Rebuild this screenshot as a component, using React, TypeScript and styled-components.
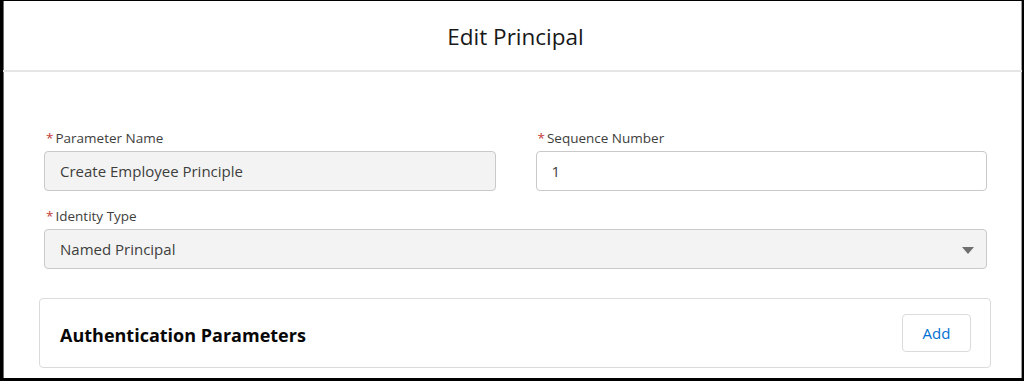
import React from 'react'
import styled, { createGlobalStyle } from 'styled-components'

const GlobalStyle = createGlobalStyle`
    html, body {
        margin: 0;
        padding: 0;
        background: #ffffff;
    }
    * {
        box-sizing: border-box;
    }
`

const Frame = styled.div`
    width: 1024px;
    height: 381px;
    background: #ffffff;
    border-style: solid;
    border-color: #000000;
    border-width: 1px 2px 3px 3px;
    box-shadow: inset 1px 0 0 #6b6b6b, inset -1px 0 0 #9a9a9a;
    font-family: 'Open Sans', 'Noto Sans', sans-serif;
    overflow: hidden;
`

const Header = styled.header`
    height: 71px;
    display: flex;
    align-items: center;
    justify-content: center;
    border-bottom: 2px solid #e5e5e5;
    padding-left: 6px;
    padding-top: 2px;
`

const Title = styled.h2`
    margin: 0;
    font-size: 22.5px;
    font-weight: 400;
    color: #181818;
`

const Body = styled.div`
    padding: 56px 31px 0 36px;
`

const Fields = styled.div`
    padding: 0 4px 0 5px;
    display: flex;
    flex-direction: column;
    gap: 15px;
`

const Row = styled.div<{ $cols: number }>`
    display: grid;
    grid-template-columns: repeat(${(p) => p.$cols}, 1fr);
    column-gap: 40px;
`

const Field = styled.div`
    display: flex;
    flex-direction: column;
    gap: 3px;
`

const Label = styled.label`
    font-size: 13.5px;
    line-height: 20px;
    color: #3e3e3c;
    padding-left: 2px;
`

const Required = styled.abbr`
    color: #c23934;
    text-decoration: none;
    margin-right: 2px;
`

const Input = styled.div<{ $disabled?: boolean }>`
    height: 40px;
    border: 1px solid #c9c9c9;
    border-radius: 4px;
    background: ${(p) => (p.$disabled ? '#f3f3f3' : '#ffffff')};
    display: flex;
    align-items: center;
    justify-content: space-between;
    padding: 0 12px 0 15px;
    font-size: 15px;
    color: #3e3e3c;
`

const Caret = styled.span`
    width: 0;
    height: 0;
    border-left: 6px solid transparent;
    border-right: 6px solid transparent;
    border-top: 7px solid #6f6f6f;
    margin-top: 2px;
`

const Card = styled.section`
    margin-top: 29px;
    height: 70px;
    border: 1px solid #dddbda;
    border-radius: 4px;
    display: flex;
    align-items: center;
    justify-content: space-between;
    padding: 0 19px 0 20px;
`

const CardTitle = styled.h3`
    margin: 4px 0 0;
    font-size: 18px;
    font-weight: 700;
    color: #080707;
`

const Button = styled.button`
    height: 38px;
    width: 69px;
    border: 1px solid #dddbda;
    border-radius: 4px;
    background: #ffffff;
    color: #0070d2;
    font-family: inherit;
    font-size: 15px;
    cursor: pointer;
`

const App: React.FC = () => {
    return (
        <>
            <GlobalStyle />
            <Frame>
                <Header>
                    <Title>Edit Principal</Title>
                </Header>
                <Body>
                    <Fields>
                        <Row $cols={2}>
                            <Field>
                                <Label>
                                    <Required>*</Required>Parameter Name
                                </Label>
                                <Input $disabled>Create Employee Principle</Input>
                            </Field>
                            <Field>
                                <Label>
                                    <Required>*</Required>Sequence Number
                                </Label>
                                <Input>1</Input>
                            </Field>
                        </Row>
                        <Row $cols={1}>
                            <Field>
                                <Label>
                                    <Required>*</Required>Identity Type
                                </Label>
                                <Input $disabled>
                                    Named Principal
                                    <Caret />
                                </Input>
                            </Field>
                        </Row>
                    </Fields>
                    <Card>
                        <CardTitle>Authentication Parameters</CardTitle>
                        <Button>Add</Button>
                    </Card>
                </Body>
            </Frame>
        </>
    )
}

export default App
